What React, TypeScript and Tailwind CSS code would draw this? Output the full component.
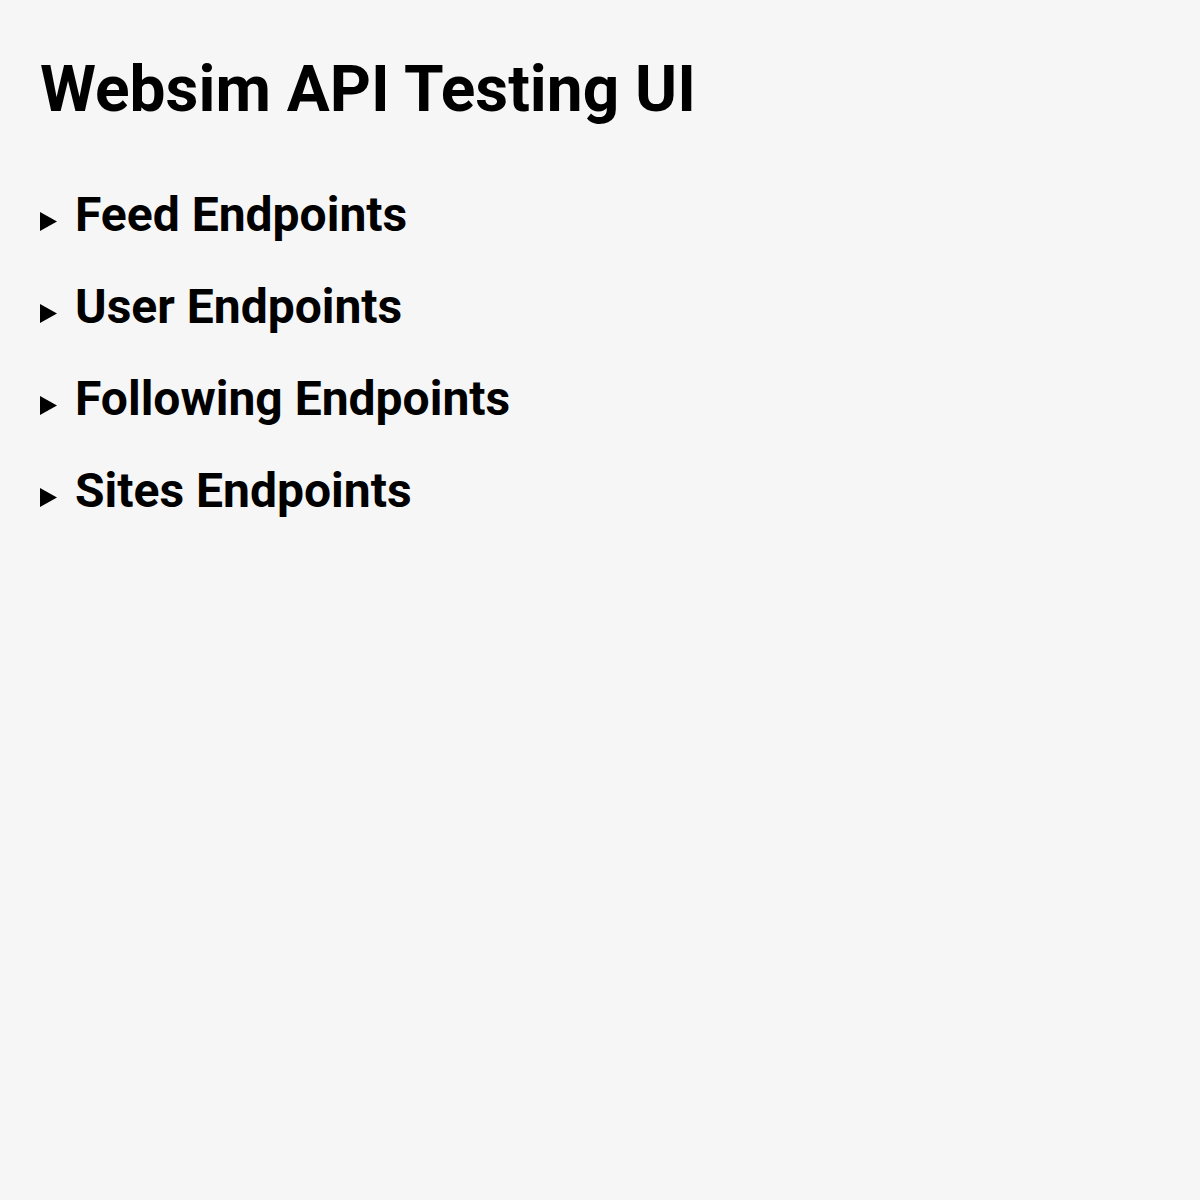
const sections = ["Feed Endpoints", "User Endpoints", "Following Endpoints", "Sites Endpoints"];

function Caret() {
  return (
    <svg width="17" height="19" viewBox="0 0 17 19" className="mb-[3px] mr-[18px] shrink-0">
      <path d="M0 0 L17 9.5 L0 19 Z" fill="#000" />
    </svg>
  );
}

export default function App() {
  return (
    <div
      className="min-h-[1200px] bg-[#f6f6f6] px-10 pt-[52px] text-black"
      style={{ fontFamily: "Roboto, 'Noto Sans', sans-serif" }}
    >
      <h1 className="text-[64px] leading-[75px] font-bold">Websim API Testing UI</h1>
      <div className="mt-[60px] flex flex-col gap-9">
        {sections.map((s) => (
          <div key={s} className="flex items-baseline cursor-pointer">
            <Caret />
            <span className="text-[48px] leading-[56px] font-bold">{s}</span>
          </div>
        ))}
      </div>
    </div>
  );
}
